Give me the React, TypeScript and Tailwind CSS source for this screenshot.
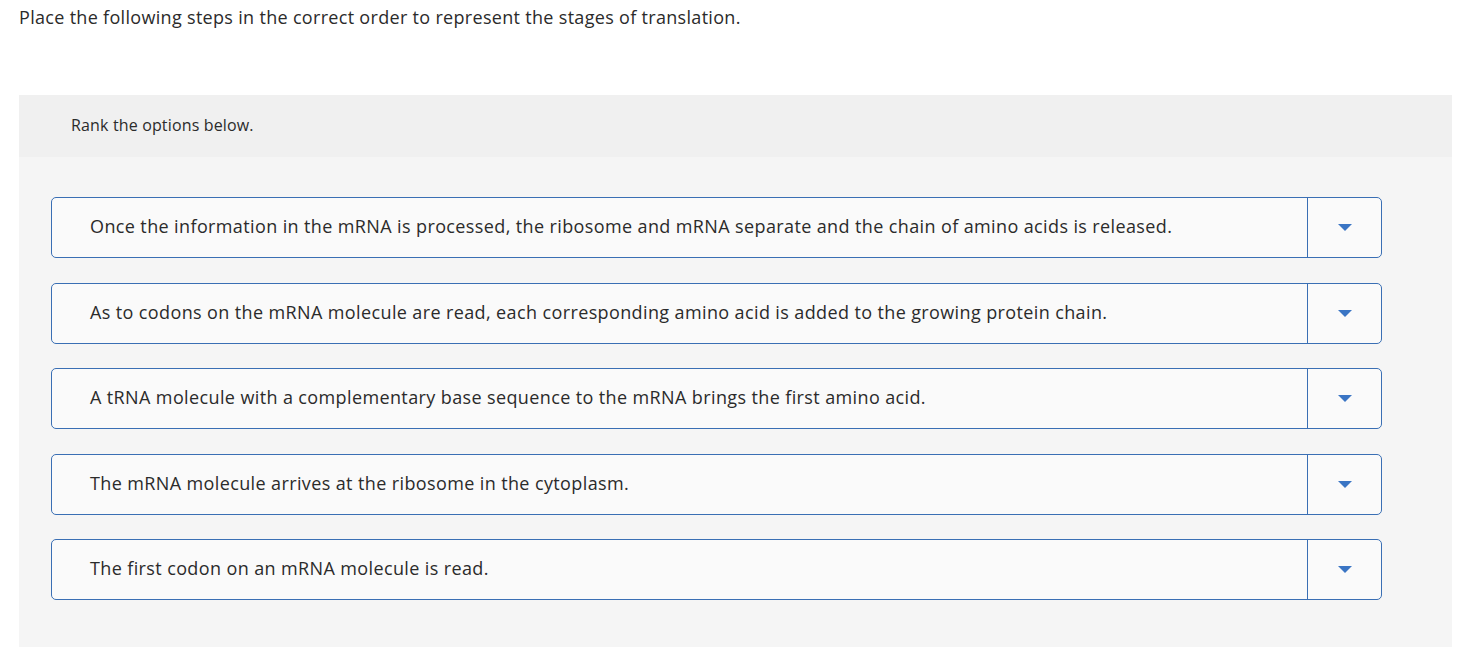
const options = [
    "Once the information in the mRNA is processed, the ribosome and mRNA separate and the chain of amino acids is released.",
    "As to codons on the mRNA molecule are read, each corresponding amino acid is added to the growing protein chain.",
    "A tRNA molecule with a complementary base sequence to the mRNA brings the first amino acid.",
    "The mRNA molecule arrives at the ribosome in the cytoplasm.",
    "The first codon on an mRNA molecule is read.",
];

const spacing = ["mt-0", "mt-[25px]", "mt-[24px]", "mt-[25px]", "mt-[24px]"];

function RankRow({ text, className }: { text: string; className: string }) {
    return (
        <div className={`${className} flex h-[61px] rounded-[5px] border border-[#3a6fb4] bg-[#fafafa]`}>
            <div className="flex flex-1 items-center pl-[38px] pb-[2px] text-[18px] tracking-[0.38px] text-[#2b2b2b]">{text}</div>
            <div className="flex w-[74px] items-center justify-center border-l border-[#3a6fb4]">
                <svg width="14" height="8" viewBox="0 0 14 8">
                    <path d="M0 0 L14 0 L7 7 Z" fill="#3a75c4" />
                </svg>
            </div>
        </div>
    );
}

export default function App() {
    return (
        <div className="min-h-screen bg-white font-['Open_Sans',sans-serif] text-[#2b2b2b]">
            <p className="pl-[19px] pt-[5px] text-[18px] leading-[24px] tracking-[0.31px]">
                Place the following steps in the correct order to represent the stages of translation.
            </p>

            <div className="ml-[19px] mr-[22px] mt-[66px] bg-[#f5f5f5]">
                {/* header */}
                <div className="flex h-[62px] items-center bg-[#f0f0f0] pl-[52px] pb-[2px] text-[16px] tracking-[0.15px]">
                    Rank the options below.
                </div>

                <div className="flex flex-col pl-[32px] pr-[70px] pt-[40px] pb-[60px]">
                    {options.map((o, i) => (
                        <RankRow key={i} text={o} className={spacing[i]} />
                    ))}
                </div>
            </div>
        </div>
    );
}
